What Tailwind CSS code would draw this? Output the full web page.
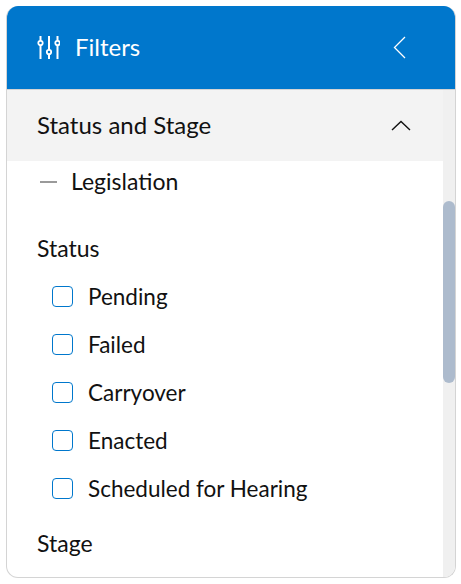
<!DOCTYPE html>
<html lang="en">

<head>
    <meta charset="UTF-8">
    <meta name="viewport" content="width=device-width, initial-scale=1.0">
    <title>Filters</title>
    <script src="https://cdn.jsdelivr.net/npm/@tailwindcss/browser@4"></script>
</head>

<body class="bg-white font-['Lato',sans-serif] text-[#111]">

    <div class="pt-[6px] pl-[6px]">
        <div class="w-[450px] h-[572px] flex flex-col overflow-hidden rounded-[12px] border-b border-l border-r border-[#d4d4d4]">

            <!-- header -->
            <div class="h-[84px] shrink-0 -mx-px flex items-center justify-between bg-[#0077cc] border-b border-[#d4d4d4] pl-[31px] pr-[50px] text-white">
                <div class="flex items-center gap-[15px]">
                    <svg class="mb-[1px]" width="23" height="23" viewBox="0 0 23 23" fill="none" stroke="white" stroke-width="2">
                        <path d="M3.500 0v23M12 0v23M20.500 0v23" />
                        <circle cx="3.500" cy="7" r="2.200" fill="#0077cc" stroke-width="1.800" />
                        <circle cx="12" cy="16" r="2.200" fill="#0077cc" stroke-width="1.800" />
                        <circle cx="20.500" cy="7" r="2.200" fill="#0077cc" stroke-width="1.800" />
                    </svg>
                    <span class="text-[24px] leading-none pb-[1px]">Filters</span>
                </div>
                <svg width="13" height="23" viewBox="0 0 13 23" fill="none" stroke="white" stroke-width="1.300">
                    <path d="M12 1 1.500 11.500 12 22" />
                </svg>
            </div>

            <div class="flex flex-1 min-h-0">
                <div class="flex-1 min-w-0">
                    <!-- accordion head -->
                    <div class="h-[71px] flex items-center justify-between bg-[#f3f3f3] pl-[30px] pr-[32px]">
                        <span class="text-[24px] leading-none pb-[2px]">Status and Stage</span>
                        <svg width="20" height="11" viewBox="0 0 20 11" fill="none" stroke="#111" stroke-width="1.400">
                            <path d="M1 10 10 1.500 19 10" />
                        </svg>
                    </div>

                    <div class="pl-[30px]">
                        <div class="flex items-center gap-[14px] pl-[3px] h-[41px]">
                            <div class="w-[17px] h-[2px] bg-[#9a9a9a]"></div>
                            <span class="text-[23px] leading-none">Legislation</span>
                        </div>

                        <div class="text-[23px] leading-none mt-[35px]">Status</div>

                        <div class="mt-[12px] pl-[15px] flex flex-col">
                            <label class="h-[48px] flex items-center gap-[15px]">
                                <span class="w-[21px] h-[21px] rounded-[4px] border border-[#0077cc] bg-white"></span>
                                <span class="text-[22.500px] leading-none pt-[2px]">Pending</span>
                            </label>
                            <label class="h-[48px] flex items-center gap-[15px]">
                                <span class="w-[21px] h-[21px] rounded-[4px] border border-[#0077cc] bg-white"></span>
                                <span class="text-[22.500px] leading-none pt-[2px]">Failed</span>
                            </label>
                            <label class="h-[48px] flex items-center gap-[15px]">
                                <span class="w-[21px] h-[21px] rounded-[4px] border border-[#0077cc] bg-white"></span>
                                <span class="text-[22.500px] leading-none pt-[2px]">Carryover</span>
                            </label>
                            <label class="h-[48px] flex items-center gap-[15px]">
                                <span class="w-[21px] h-[21px] rounded-[4px] border border-[#0077cc] bg-white"></span>
                                <span class="text-[22.500px] leading-none pt-[2px]">Enacted</span>
                            </label>
                            <label class="h-[48px] flex items-center gap-[15px]">
                                <span class="w-[21px] h-[21px] rounded-[4px] border border-[#0077cc] bg-white"></span>
                                <span class="text-[22.500px] leading-none pt-[2px]">Scheduled for Hearing</span>
                            </label>
                        </div>

                        <div class="text-[23px] leading-none mt-[20px]">Stage</div>
                    </div>
                </div>

                <!-- scrollbar -->
                <div class="w-[12px] shrink-0 bg-[#f0f0f0] pt-[111px]">
                    <div class="h-[182px] rounded-full bg-[#adbbcd]"></div>
                </div>
            </div>

        </div>
    </div>

</body>

</html>
